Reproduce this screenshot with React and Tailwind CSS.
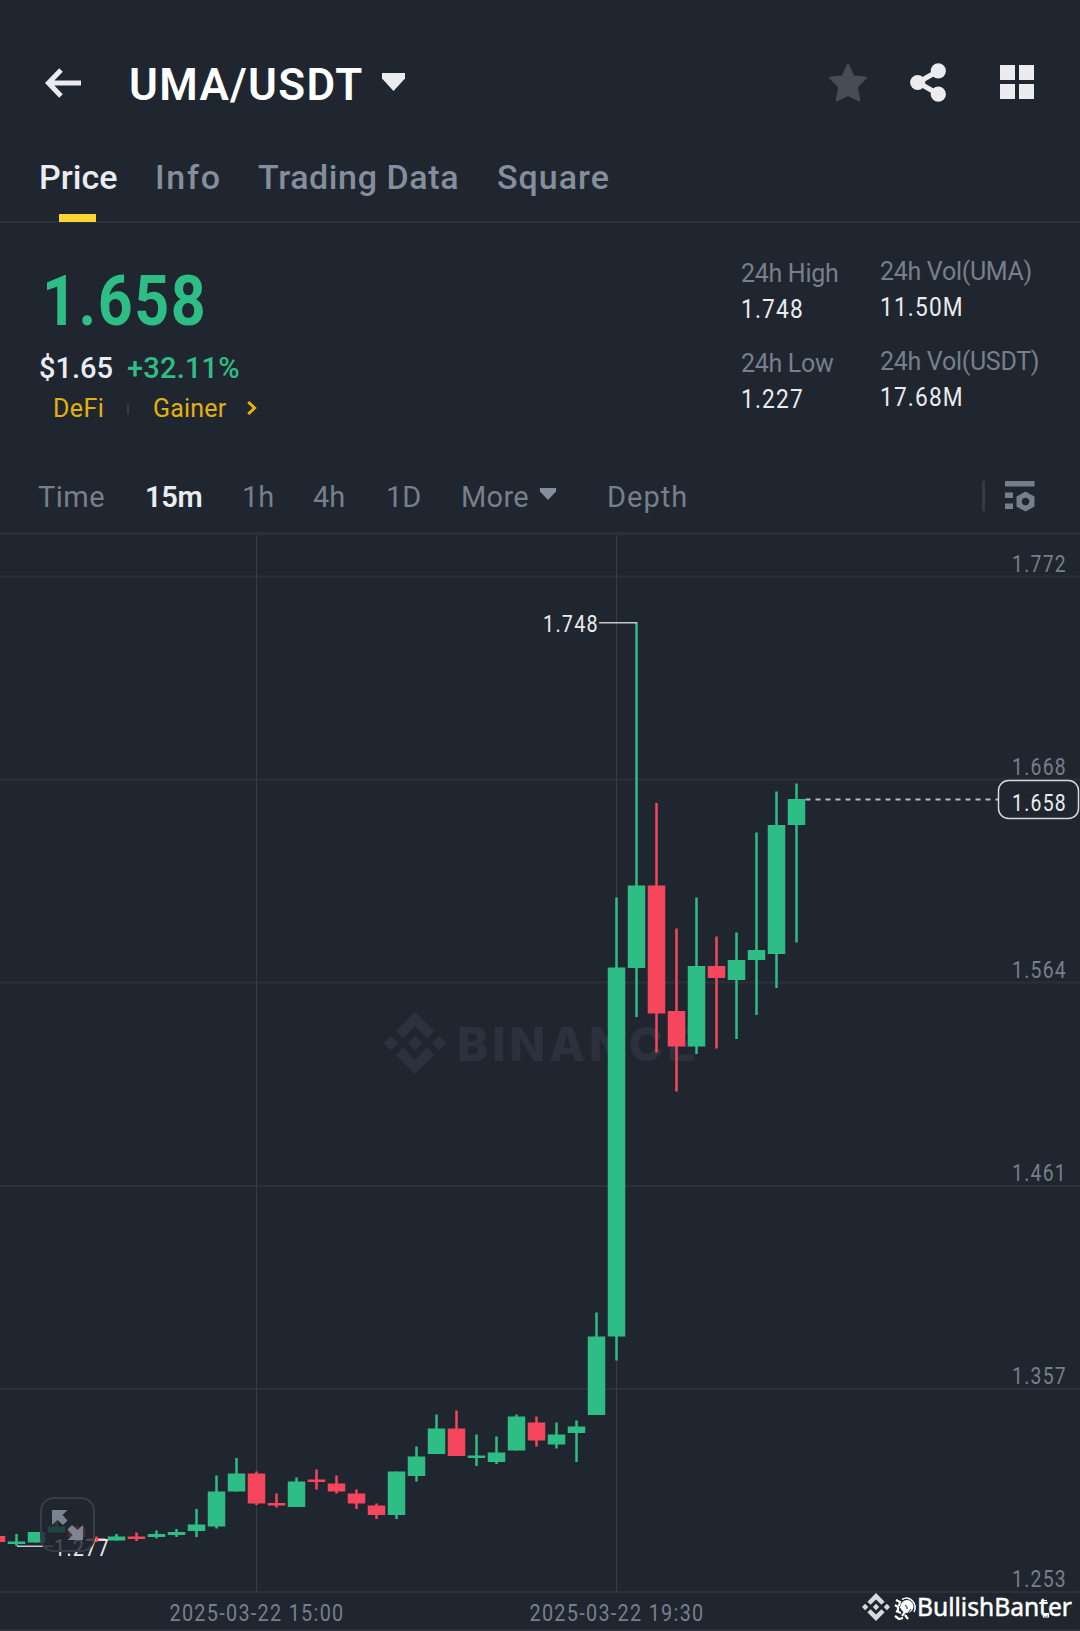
import React from "react";

const UP = "#2ebd85";
const DOWN = "#f6465d";

// [direction, high, body top, body bottom, low], one candle every 20px
const candles = [
  ["d", 1536, 1536, 1542, 1542],
  ["u", 1534, 1541.5, 1544, 1546],
  ["u", 1532, 1532, 1542.5, 1542.5],
  ["u", 1521.5, 1526.5, 1532.5, 1532.5],
  ["d", 1526, 1527, 1537, 1539],
  ["d", 1536.5, 1538, 1540.5, 1542],
  ["u", 1534, 1536.5, 1540.5, 1540.5],
  ["d", 1532.5, 1536.5, 1539, 1541],
  ["u", 1530.5, 1534, 1537, 1538.5],
  ["u", 1529, 1532, 1535, 1537],
  ["u", 1509, 1524.5, 1531, 1537],
  ["u", 1475.5, 1491.5, 1526.5, 1528.5],
  ["u", 1458, 1473.5, 1491.5, 1491.5],
  ["d", 1471.5, 1473.5, 1503.5, 1505],
  ["d", 1493.5, 1503, 1505.5, 1507.5],
  ["u", 1477.5, 1481.5, 1507, 1507],
  ["d", 1469.5, 1479.5, 1482, 1489.5],
  ["d", 1475.5, 1483.5, 1491.5, 1493.5],
  ["d", 1489.5, 1493.5, 1503.5, 1509],
  ["d", 1503.5, 1505.5, 1515, 1519],
  ["u", 1471.5, 1471.5, 1515, 1519],
  ["u", 1446.5, 1456.5, 1476, 1481.5],
  ["u", 1414.5, 1428.5, 1454, 1454],
  ["d", 1410.5, 1428.5, 1456, 1456],
  ["u", 1434.5, 1455.5, 1458, 1466],
  ["u", 1436.5, 1452.5, 1462, 1464],
  ["u", 1414.5, 1416.5, 1450.5, 1450.5],
  ["d", 1416.5, 1422.5, 1440.5, 1446.5],
  ["u", 1422.5, 1434.5, 1444.5, 1448.5],
  ["u", 1420.5, 1426.5, 1433, 1462],
  ["u", 1312.5, 1336.5, 1415, 1415],
  ["u", 897.5, 967.5, 1336.5, 1360.5],
  ["u", 622, 885.5, 968, 1017],
  ["d", 803, 885.5, 1013.5, 1052.5],
  ["d", 928.5, 1011, 1046.5, 1091.5],
  ["u", 897.5, 966, 1046.5, 1054],
  ["d", 936.5, 966, 978, 1048.5],
  ["u", 932.5, 960, 980, 1039],
  ["u", 832.5, 950, 960, 1015],
  ["u", 791.5, 825, 954, 988],
  ["u", 783.5, 799, 825, 942.5],
];

const gridRows = [
  { y: 576.5, label: "1.772" },
  { y: 779.5, label: "1.668" },
  { y: 982.5, label: "1.564" },
  { y: 1186, label: "1.461" },
  { y: 1389, label: "1.357" },
  { y: 1592, label: "1.253" },
];

const gridCols = [
  { x: 256.5, label: "2025-03-22 15:00" },
  { x: 616.5, label: "2025-03-22 19:30" },
];

function BinanceMark({ x, y, size, fill }) {
  return (
    <svg x={x} y={y} width={size} height={size} viewBox="0 0 24 24" fill={fill}>
      <path d="M12 0 4.6 7.4 7.35 10.15 12 5.5 16.65 10.15 19.4 7.4z" />
      <path d="M12 24 4.6 16.6 7.35 13.85 12 18.5 16.65 13.85 19.4 16.6z" />
      <path d="M2.7 9.3 5.4 12 2.7 14.7 0 12zM12 9.3 14.7 12 12 14.7 9.3 12zM21.3 9.3 24 12 21.3 14.7 18.6 12z" />
    </svg>
  );
}

function Header() {
  return (
    <header className="mt-11 flex h-[76px] items-center pl-[44px] pr-[46px]">
      <svg className="mt-0.5" width="37" height="30" viewBox="0 0 37 30" fill="none" stroke="#eaecef" strokeWidth="5">
        <path d="M37 15H5M17 2 4.5 15 17 28" />
      </svg>
      <h1 className="ml-12 mt-1.5 w-[238px] whitespace-nowrap text-[44px] leading-[60px] font-semibold tracking-[1.3px] text-white">
        UMA/USDT
      </h1>
      <svg className="ml-[15px]" width="23" height="18" viewBox="0 0 23 18" fill="#eaecef">
        <path d="M0 0H23V5.5L11.5 18 0 5.5z" />
      </svg>
      <div className="ml-auto flex items-center">
        <svg width="38" height="39" viewBox="0 0 38 39" fill="#474d57" stroke="#474d57" strokeWidth="2" strokeLinejoin="round">
          <path d="M19 1.5 24.3 13.3 37 14.8 27.8 23.8 30.3 37.5 19 31.8 7.7 37.5 10.2 23.8 1 14.8 13.7 13.3z" />
        </svg>
        <svg className="ml-[43px]" width="36" height="39" viewBox="0 0 36 39" fill="#eaecef">
          <path d="M28 8 8 19.5 28 31" fill="none" stroke="#eaecef" strokeWidth="5" />
          <circle cx="28.3" cy="7.8" r="7.6" />
          <circle cx="7.7" cy="19.5" r="7.6" />
          <circle cx="28.3" cy="31.2" r="7.6" />
        </svg>
        <div className="ml-[54px] grid grid-cols-2 gap-1">
          {[0, 1, 2, 3].map((i) => (
            <span key={i} className="h-[15px] w-[15px] bg-[#eaecef]" />
          ))}
        </div>
      </div>
    </header>
  );
}

function Tabs() {
  return (
    <nav className="flex h-[103px] items-start border-b-2 border-[#2b313b] pl-[39px] pt-[37px] text-[34px] leading-10 font-medium text-[#848e9c]">
      <div className="relative h-16 w-[116px] text-[#eaecef]">
        <span>Price</span>
        <span className="absolute bottom-[-1px] left-[20px] h-2 w-[37px] bg-[#fcd535]" />
      </div>
      <span className="w-[103px] tracking-[1.7px]">Info</span>
      <span className="w-[239px] whitespace-nowrap tracking-[0.6px]">Trading Data</span>
      <span className="tracking-[1px]">Square</span>
    </nav>
  );
}

function Stat({ label, value }) {
  return (
    <div className="h-[90px]">
      <p className="whitespace-nowrap text-[25px] leading-[30px] tracking-[-0.3px] text-[#767f8c]">{label}</p>
      <p className="mt-[5px] origin-left scale-x-[0.89] text-[25.5px] leading-[30px] tracking-[1.3px] text-[#eaecef]">
        {value}
      </p>
    </div>
  );
}

function Summary() {
  return (
    <section className="flex h-[239px] pl-[39px]">
      <div className="w-[702px] pt-[43px]">
        <p className="ml-[3px] origin-left scale-x-[0.87] text-[70px] leading-[70px] font-bold tracking-[1.8px] text-[#2ebd85]">
          1.658
        </p>
        <p className="mt-[14px] flex text-[29px] leading-9 font-medium">
          <span className="w-[88px] text-[#eaecef]">$1.65</span>
          <span className="tracking-[0.2px] text-[#2ebd85]">+32.11%</span>
        </p>
        <div className="mt-2 flex items-center pl-3.5 text-[25px] leading-[30px] text-[#e3b10f]">
          <span className="w-[74px] tracking-[0.4px]">DeFi</span>
          <span className="h-2.5 w-0.5 bg-[#363c47]" />
          <span className="ml-6 w-[94px] tracking-[0.2px]">Gainer</span>
          <svg className="-mt-0.5" width="10" height="14" viewBox="0 0 10 14" fill="none" stroke="#e3b10f" strokeWidth="3">
            <path d="M1.2 1 7.6 7 1.2 13" />
          </svg>
        </div>
      </div>
      <div className="w-[139px] pt-9">
        <Stat label="24h High" value="1.748" />
        <Stat label="24h Low" value="1.227" />
      </div>
      <div className="pt-[34px]">
        <Stat label="24h Vol(UMA)" value="11.50M" />
        <Stat label="24h Vol(USDT)" value="17.68M" />
      </div>
    </section>
  );
}

function Intervals() {
  return (
    <div className="flex h-[73px] items-center border-b-[3px] border-[#2a303a] pl-[38px] pt-0.5 text-[29px] text-[#767f8c]">
      <span className="w-[107px] tracking-[0.5px]">Time</span>
      <span className="w-[97px] font-semibold tracking-[-0.3px] text-[#eaecef]">15m</span>
      <span className="w-[71px]">1h</span>
      <span className="w-[73px]">4h</span>
      <span className="w-[75px]">1D</span>
      <span className="w-[79px] tracking-[0.3px]">More</span>
      <svg className="-mt-2" width="16" height="12" viewBox="0 0 16 12" fill="#848e9c">
        <path d="M0 0H16V3.5L8 12 0 3.5z" />
      </svg>
      <span className="ml-[51px] tracking-[1px]">Depth</span>
      <span className="-mt-1 ml-auto h-[30px] w-[3px] bg-[#363c47]" />
      <svg className="-mt-1 ml-5 mr-[45px]" width="30" height="31" viewBox="0 0 30 31" fill="#767f8c">
        <path d="M0 0H29.500V5.500H0zM0 11.500H8V17H0zM0 22.500H8V28H0z" />
        <path fillRule="evenodd" d="M20.500 10.500 29.500 15.500V25.500L20.500 30.500 11.500 25.500V15.500zM20.500 16.700a3.800 3.800 0 1 0 .01 0z" />
      </svg>
    </div>
  );
}

function Chart() {
  return (
    <svg
      className="block"
      width="1080"
      height="1096"
      viewBox="0 535 1080 1096"
      fontFamily="Roboto, sans-serif"
      fontSize="23"
    >
      {/* grid */}
      {gridRows.map((r) => (
        <rect key={r.y} x="0" y={r.y - 1} width="1080" height="2" fill="#2b303b" />
      ))}
      {gridCols.map((c) => (
        <rect key={c.x} x={c.x - 0.5} y="535" width="1" height="1057" fill="#363c48" />
      ))}
      <rect x="0" y="1629" width="1080" height="2" fill="#2b303b" />

      {/* watermark */}
      <BinanceMark x={384} y={1012} size={62} fill="#2c313d" />
      <text
        x="457"
        y="1060.5"
        fontFamily="Inter, sans-serif"
        fontSize="47"
        fontWeight="800"
        fill="#2c313d"
        textLength="239"
      >
        BINANCE
      </text>

      {candles.map(([dir, high, top, bottom, low], i) => {
        const cx = i * 20 - 3.5;
        const color = dir === "u" ? UP : DOWN;
        return (
          <g key={i} fill={color}>
            <rect x={cx - 1.25} y={high} width="2.5" height={low - high} />
            <rect x={cx - 8.75} y={top} width="17.5" height={bottom - top} />
          </g>
        );
      })}

      {/* high and low markers */}
      <g fill="#eaecef" letterSpacing="1.5">
        <rect x="599" y="622" width="38" height="1.5" fill="#c4c8ce" />
        <text x="543" y="631.5" textLength="56" lengthAdjust="spacingAndGlyphs">1.748</text>
        <rect x="17" y="1545.5" width="36" height="1.5" fill="#c4c8ce" />
        <text x="54" y="1555.5" textLength="56" lengthAdjust="spacingAndGlyphs">1.277</text>
      </g>

      {/* full screen button */}
      <rect x="41" y="1498" width="53" height="53" rx="13" fill="#20262f" fillOpacity="0.8" stroke="#363c48" strokeWidth="2" />
      <g fill="#848e9c" fillOpacity="0.9">
        <path d="M52 1510H67.5L62.5 1515 67.5 1520.5 63 1525 57.500 1520 52 1525z" />
        <path d="M83 1540H67.5L72.5 1535 67.5 1529.5 72 1525 77.500 1530 83 1525z" />
      </g>

      {/* axes */}
      <g fill="#767f8c" letterSpacing="1.5">
        {gridRows.map((r) => (
          <text key={r.label} x="1012" y={r.y - 5} textLength="55" lengthAdjust="spacingAndGlyphs">
            {r.label}
          </text>
        ))}
        {gridCols.map((c) => (
          <text key={c.label} x={c.x - 87} y="1620.5" textLength="175" lengthAdjust="spacingAndGlyphs">
            {c.label}
          </text>
        ))}
      </g>

      {/* last price */}
      <line x1="805.5" x2="998" y1="799.5" y2="799.5" stroke="#b7bbc2" strokeWidth="2" strokeDasharray="5 5" />
      <rect x="998.5" y="780.5" width="80" height="38" rx="10" fill="#20262f" stroke="#d5d8dc" strokeWidth="1.5" />
      <text x="1012" y="810.5" fill="#eaecef" letterSpacing="1.5" textLength="55" lengthAdjust="spacingAndGlyphs">
        1.658
      </text>

      {/* author signature */}
      <BinanceMark x={862} y={1593} size={28} fill="#d9dadc" />
      <g fill="none" stroke="#fff" strokeWidth="1.5">
        <circle cx="907" cy="1606.5" r="6.5" fill="#fff" stroke="none" />
        <path d="M902 1599.5q6-3.500 10.500 1.500t1.500 11" />
        <path d="M896 1600l4 2-1 4M895 1605l3 2v6M900 1607l3 1 2 4-3 4M895 1616l4 3 4-1M905 1615l3 4M896 1611l5 2" strokeWidth="2.200" />
        <path d="M905 1605q3 1 2 4M911 1609l-3 4" stroke="#20262f" strokeWidth="1" />
      </g>
      <text
        x="917"
        y="1616"
        fontFamily="Noto Sans, sans-serif"
        fontSize="25"
        fill="#fff"
        stroke="#fff"
        strokeWidth="0.5"
        textLength="155"
        lengthAdjust="spacingAndGlyphs"
      >
        BullishBanter
      </text>
      <path d="M1041 1600.500h6M1043.500 1613.500h5v3.500h-5z" fill="none" stroke="#fff" strokeWidth="1.200" />
    </svg>
  );
}

export default function App() {
  return (
    <div className="flex h-[1631px] w-[1080px] flex-col overflow-hidden bg-[#20262f] font-['Roboto',sans-serif]">
      <Header />
      <Tabs />
      <Summary />
      <Intervals />
      <Chart />
    </div>
  );
}
